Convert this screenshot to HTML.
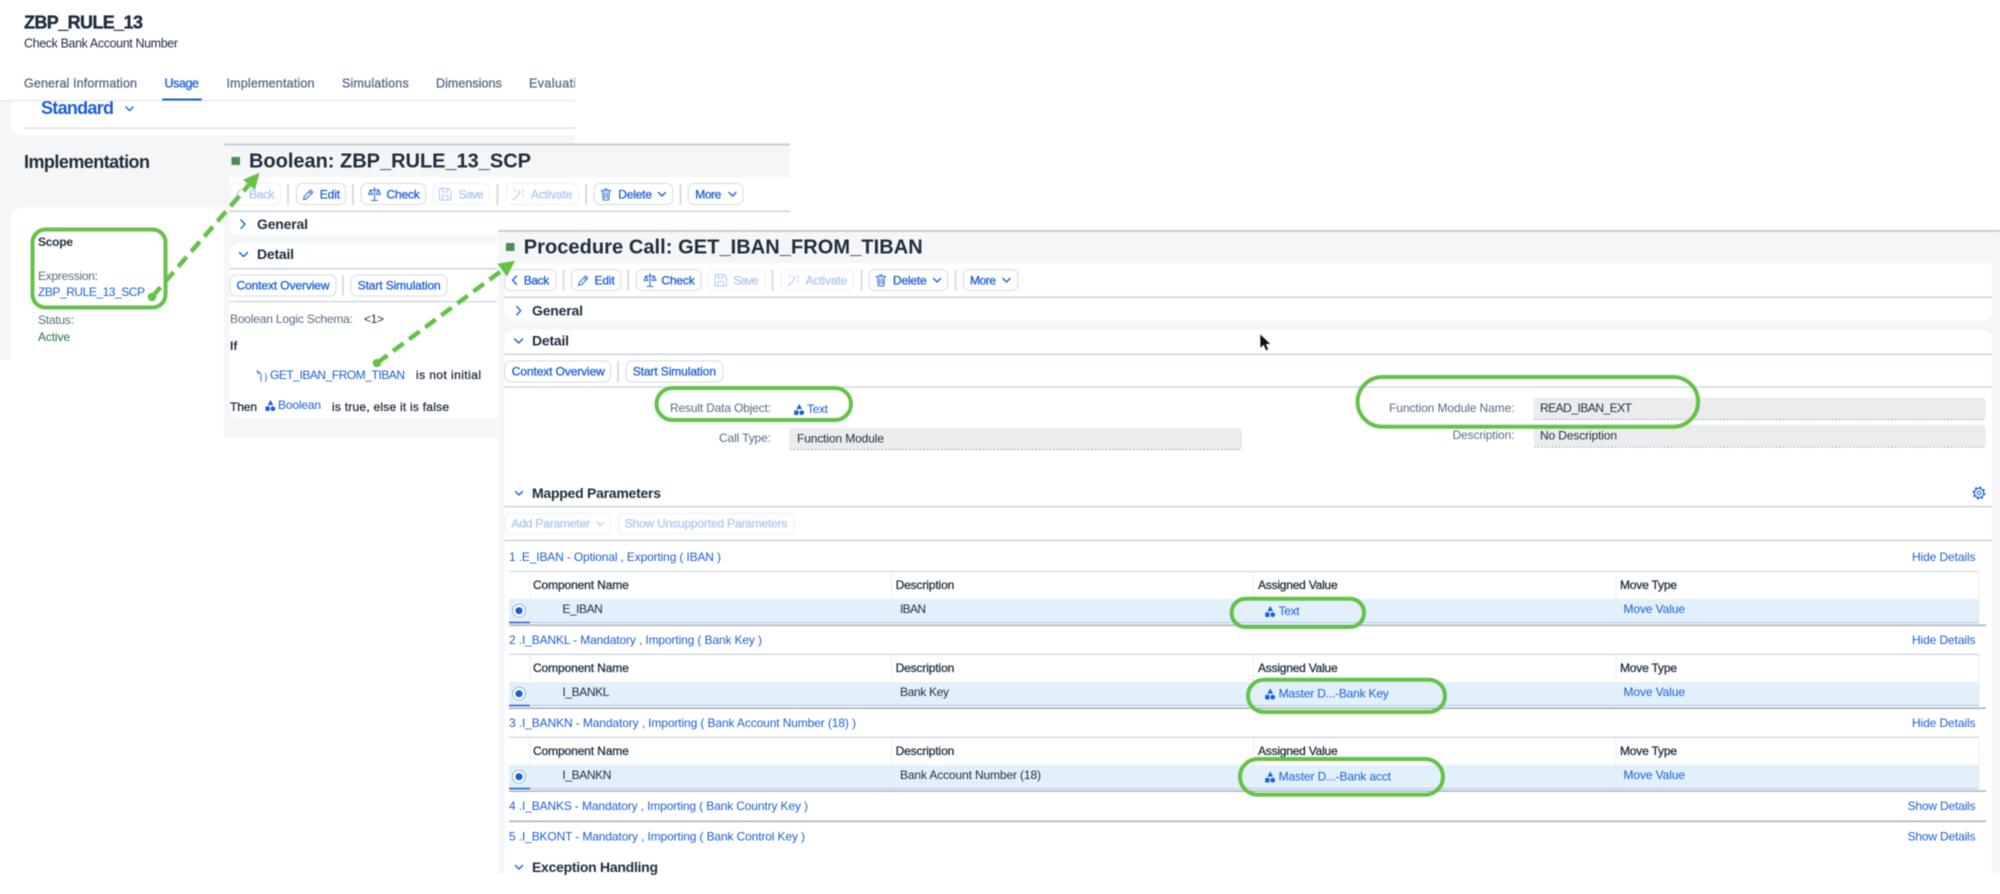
<!DOCTYPE html>
<html lang="en">
<head>
<meta charset="utf-8">
<title>ZBP_RULE_13</title>
<style>
html,body{margin:0;padding:0;background:#fff;width:2000px;height:894px;overflow:hidden}
svg{display:block;filter:blur(.4px)}
text{font-family:"Liberation Sans",sans-serif;font-size:12px;fill:#1d2d3e}
.b{font-weight:700}
.s{stroke:#1d2d3e;stroke-width:.3px}
.l{fill:#1a5fd6}
.l.s{stroke:#1a5fd6}
.g{fill:#556b82}
.g.s{stroke:#556b82}
.d{fill:#aec8ef}
.d.s{stroke:#aec8ef}
.bt{fill:#fff;stroke:#d5dae1;stroke-width:1}
.bd{fill:#fff;stroke:#ebeff3;stroke-width:1}
.sep{stroke:#cfd4d9;stroke-width:1.6}
.ic{fill:none;stroke:#2f6fd9;stroke-width:1.1;stroke-linecap:round;stroke-linejoin:round}
.icd{fill:none;stroke:#b4cbef;stroke-width:1.1;stroke-linecap:round;stroke-linejoin:round}
.ch{fill:none;stroke:#1a5fd6;stroke-width:1.4;stroke-linecap:round;stroke-linejoin:round}
.ov{fill:none;stroke:#64c247;stroke-width:4}
</style>
</head>
<body>
<svg width="2000" height="894" viewBox="0 0 2000 894" xmlns="http://www.w3.org/2000/svg">
<defs>
<symbol id="dobj" viewBox="0 0 11 12">
<path d="M5.5 0L8.6 5.6H2.4Z" fill="#1a5fd6"/>
<rect x="0" y="7" width="4.6" height="5" rx=".8" fill="#1a5fd6"/>
<circle cx="8.2" cy="9.5" r="2.6" fill="#1a5fd6"/>
</symbol>
</defs>

<!-- Panel 1 -->
<rect x="0" y="0" width="2000" height="894" fill="#fff"/>
<rect x="0" y="100" width="575" height="44" fill="#f5f6f7"/>
<rect x="0" y="144" width="224" height="216" fill="#f5f6f7"/>
<path d="M11 100H575V135H23a12 12 0 0 1-12-12Z" fill="#fff"/>
<rect x="24" y="127.500" width="551" height="1.200" fill="#d3dae2"/>
<text class="l b" x="41" y="114" style="font-size:18px" textLength="73">Standard</text>
<path class="ch" d="M126 107l3.500 3.500 3.500-3.500"/>
<rect x="0" y="0" width="575" height="100" fill="#fff"/>
<rect x="0" y="100" width="575" height="1.200" fill="#dfe3e8"/>
<text class="b" x="24" y="28.500" style="font-size:18px;stroke:#1d2d3e;stroke-width:.35px" textLength="119">ZBP_RULE_13</text>
<text x="24" y="47.500" style="font-size:12.500px" textLength="154">Check Bank Account Number</text>
<text class="g s" x="24" y="87.500" textLength="113" style="font-size:12.500px">General Information</text>
<text class="l s" x="164.500" y="87.500" textLength="34.500" style="font-size:12.500px">Usage</text>
<text class="g s" x="226.500" y="87.500" textLength="88" style="font-size:12.500px">Implementation</text>
<text class="g s" x="342" y="87.500" textLength="66.700" style="font-size:12.500px">Simulations</text>
<text class="g s" x="436" y="87.500" textLength="65.700" style="font-size:12.500px">Dimensions</text>
<text class="g s" x="529" y="87.500" textLength="62" style="font-size:12.500px">Evaluation</text>
<rect x="575" y="60" width="60" height="40" fill="#fff"/>
<rect x="162" y="98.500" width="40" height="2" rx="1" fill="#1a5fd6"/>
<text class="b" x="24" y="168" style="font-size:18px" textLength="126">Implementation</text>

<path d="M23 207H224V360H11V219a12 12 0 0 1 12-12Z" fill="#fff"/>
<text class="b" x="38" y="246" textLength="35">Scope</text>
<text class="g" x="38" y="280" textLength="60">Expression:</text>
<text class="l" x="38" y="296" textLength="107">ZBP_RULE_13_SCP</text>
<text class="g" x="38" y="324" textLength="36">Status:</text>
<text x="38" y="341" textLength="32" style="fill:#256f3a">Active</text>

<!-- Panel 2 -->
<rect x="224" y="144" width="566" height="86" fill="#f5f6f7"/>
<rect x="224" y="230" width="273" height="208" fill="#f5f6f7"/>
<rect x="224" y="143.500" width="566" height="2" fill="#c9cdd1"/>
<rect x="231.500" y="157" width="8.500" height="8" fill="#4c8c56"/>
<text class="b" x="249" y="167.700" style="font-size:20px" textLength="282">Boolean: ZBP_RULE_13_SCP</text>
<rect x="229" y="177" width="561" height="33.500" fill="#fff"/>
<rect x="229" y="210.500" width="561" height="1.500" fill="#c8d0da"/>
<path d="M229 212H790V230H497V235H239a10 10 0 0 1-10-10Z" fill="#fff"/>
<path d="M240 244H497V268H230V254a10 10 0 0 1 10-10Z" fill="#fff"/>
<rect x="230" y="268" width="267" height="1.500" fill="#c8d0da"/>
<path d="M230 269.500H497V418H240a10 10 0 0 1-10-10Z" fill="#fff"/>
<rect x="230" y="301" width="267" height="1.200" fill="#c8d0da"/>

<rect class="bd" x="229.800" y="183.500" width="50.700" height="21" rx="6"/>
<rect class="bt" x="296.600" y="183.500" width="49" height="21" rx="6"/>
<rect class="bt" x="361" y="183.500" width="64.600" height="21" rx="6"/>
<rect class="bd" x="433" y="183.500" width="56.500" height="21" rx="6"/>
<rect class="bd" x="506" y="183.500" width="72.600" height="21" rx="6"/>
<rect class="bt" x="594" y="183.500" width="78.700" height="21" rx="6"/>
<rect class="bt" x="688.300" y="183.500" width="54.700" height="21" rx="6"/>
<path class="sep" d="M288 184v21M353 184v21M497.500 184v21M586 184v21M680.500 184v21"/>
<path class="icd" d="M241 189l-4 4.500 4 4.500"/>
<text class="d s" x="249" y="198.500" textLength="25.500">Back</text>
<path class="ic" d="M303.500 199.500l.8-3 6.200-6.500 2.200 2.200-6.200 6.500zM309 191.500l2.200 2.200"/>
<text class="l s" x="319.800" y="198.500" textLength="20.300">Edit</text>
<path class="ic" d="M374.500 187.500v13M371.500 200.500h6M370 190h9M370.500 190l-2 4.500h4zM378.500 190l-2 4.500h4z"/>
<text class="l s" x="386.500" y="198.500" textLength="33.300">Check</text>
<path class="icd" d="M439.500 188.500h9l2.500 2.500v9h-11.500zM442.500 188.500v3.500h5v-3.500M442.500 200.500v-5h5.500v5"/>
<text class="d s" x="458.500" y="198.500" textLength="25">Save</text>
<path class="icd" d="M513 200l7-7.500M518.500 190.500l1 1M523 189.500v1.500M515 189v2M523 194v2"/>
<text class="d s" x="531" y="198.500" textLength="41.500">Activate</text>
<path class="ic" d="M601 190.500h10M602.500 190.500l.7 9.500h5.600l.7-9.500M604.500 189h3M604.800 192.500v5.500M607.200 192.500v5.500"/>
<text class="l s" x="618.300" y="198.500" textLength="33.700">Delete</text>
<path class="ch" d="M658.500 192.500l3.500 3.500 3.500-3.500"/>
<text class="l s" x="695.300" y="198.500" textLength="26">More</text>
<path class="ch" d="M729 192.500l3.500 3.500 3.500-3.500"/>

<path class="ch" d="M241 220l4 4.200-4 4.200"/>
<text class="b" x="257" y="229" style="font-size:14px" textLength="51">General</text>
<path class="ch" d="M239.500 252.500l4 4 4-4"/>
<text class="b" x="257" y="259" style="font-size:14px" textLength="37">Detail</text>
<rect class="bt" x="230" y="275" width="106" height="21" rx="6"/>
<path class="sep" d="M343 275v21"/>
<rect class="bt" x="351" y="275" width="96" height="21" rx="6"/>
<text class="l s" x="236.500" y="289.500" textLength="93">Context Overview</text>
<text class="l s" x="357.700" y="289.500" textLength="83">Start Simulation</text>
<text class="g" x="230" y="323" textLength="123">Boolean Logic Schema:</text>
<text x="364" y="323" textLength="20">&lt;1&gt;</text>
<text class="b" x="230" y="350">If</text>
<path d="M257 371l3 1.500-1.500 1.500zM262 373.500q-1 0-1 1.500v1.500q0 1-1 1 1 0 1 1v1.500q0 1.500 1 1.500M265 373.500q1 0 1 1.500v1.500q0 1 1 1-1 0-1 1v1.500q0 1.500-1 1.500" fill="none" stroke="#1a5fd6" stroke-width=".8"/>
<text class="l" x="270" y="379" textLength="135">GET_IBAN_FROM_TIBAN</text>
<text class="s" x="416" y="379" textLength="65">is not initial</text>
<text class="s" x="230" y="411" textLength="27">Then</text>
<use href="#dobj" x="265" y="400" width="11" height="11"/>
<text class="l" x="278" y="409" textLength="43">Boolean</text>
<text class="s" x="332" y="411" textLength="117">is true, else it is false</text>

<!-- Panel 3 -->
<rect x="498" y="230" width="1502" height="643" fill="#f5f6f7"/>
<rect x="498" y="230" width="1502" height="2" fill="#c9cdd1"/>
<rect x="506" y="243" width="8.500" height="8" fill="#4c8c56"/>
<text class="b" x="523.700" y="253.700" style="font-size:20px" textLength="399">Procedure Call: GET_IBAN_FROM_TIBAN</text>
<rect x="504.500" y="263" width="1487.500" height="33.500" fill="#fff"/>
<rect x="504.500" y="296.500" width="1487.500" height="1.500" fill="#c8d0da"/>
<path d="M504.500 298H1992V311a10 10 0 0 1-10 10H514.500a10 10 0 0 1-10-10Z" fill="#fff"/>
<path d="M514.500 330H1982a10 10 0 0 1 10 10V873H504.500V340a10 10 0 0 1 10-10Z" fill="#fff"/>

<rect class="bt" x="504.800" y="269.500" width="51.200" height="21" rx="6"/>
<rect class="bt" x="571.300" y="269.500" width="49.700" height="21" rx="6"/>
<rect class="bt" x="636.300" y="269.500" width="64.700" height="21" rx="6"/>
<rect class="bd" x="708" y="269.500" width="57" height="21" rx="6"/>
<rect class="bd" x="781" y="269.500" width="72.500" height="21" rx="6"/>
<rect class="bt" x="869" y="269.500" width="78.700" height="21" rx="6"/>
<rect class="bt" x="963.300" y="269.500" width="54.500" height="21" rx="6"/>
<path class="sep" d="M563.500 270v21M628.200 270v21M772.600 270v21M861.600 270v21M955.600 270v21"/>
<path class="ch" d="M516.500 276l-4 4.200 4 4.200"/>
<text class="l s" x="523.700" y="284.500" textLength="25.600">Back</text>
<path class="ic" d="M578.500 285.500l.8-3 6.200-6.500 2.200 2.200-6.200 6.500zM584 277.500l2.200 2.200"/>
<text class="l s" x="594.500" y="284.500" textLength="20.300">Edit</text>
<path class="ic" d="M650 273.500v13M647 286.500h6M645.500 276h9M646 276l-2 4.500h4zM654 276l-2 4.500h4z"/>
<text class="l s" x="661.400" y="284.500" textLength="33.300">Check</text>
<path class="icd" d="M715 274.500h9l2.500 2.500v9H715zM718 274.500v3.500h5v-3.500M718 286.500v-5h5.500v5"/>
<text class="d s" x="733.400" y="284.500" textLength="25">Save</text>
<path class="icd" d="M788 286l7-7.500M793.500 276.500l1 1M798 275.500v1.500M790 275v2M798 280v2"/>
<text class="d s" x="805.700" y="284.500" textLength="41.500">Activate</text>
<path class="ic" d="M876 276.500h10M877.500 276.500l.7 9.500h5.600l.7-9.500M879.500 275h3M879.800 278.500v5.500M882.200 278.500v5.500"/>
<text class="l s" x="893" y="284.500" textLength="33.700">Delete</text>
<path class="ch" d="M933.500 278.500l3.500 3.500 3.500-3.500"/>
<text class="l s" x="970" y="284.500" textLength="26">More</text>
<path class="ch" d="M1003 278.500l3.500 3.500 3.500-3.500"/>

<path class="ch" d="M516.700 306.500l4 4.200-4 4.200"/>
<text class="b" x="532" y="315.700" style="font-size:14px" textLength="51">General</text>
<path class="ch" d="M514.700 339l4 4 4-4"/>
<text class="b" x="532" y="345.700" style="font-size:14px" textLength="37">Detail</text>
<rect x="504.500" y="353.500" width="1487.500" height="1.500" fill="#c8d0da"/>
<rect class="bt" x="504.800" y="361" width="105.700" height="21" rx="6"/>
<path class="sep" d="M618 361v21"/>
<rect class="bt" x="626" y="361" width="97" height="21" rx="6"/>
<text class="l s" x="511.800" y="375.500" textLength="93">Context Overview</text>
<text class="l s" x="632.700" y="375.500" textLength="83.300">Start Simulation</text>
<rect x="504.500" y="386.500" width="1487.500" height="1.200" fill="#c8d0da"/>

<text class="g" x="670" y="412" textLength="101">Result Data Object:</text>
<use href="#dobj" x="794" y="404" width="10.500" height="11"/>
<text class="l" x="807" y="413" textLength="21">Text</text>
<text class="g" x="719" y="442" textLength="52">Call Type:</text>
<rect x="789" y="428" width="453" height="21" rx="3" fill="#eaecee"/>
<path d="M790 449.500H1242" stroke="#a4adb8" stroke-dasharray="2 1.500" fill="none"/>
<text x="797" y="442.500" textLength="87">Function Module</text>
<text class="g" x="1389" y="412" textLength="125.500">Function Module Name:</text>
<rect x="1533.700" y="397.700" width="452" height="21.500" rx="3" fill="#eaecee"/>
<path d="M1534 419.500H1986" stroke="#a4adb8" stroke-dasharray="2 1.500" fill="none"/>
<text x="1540" y="412" textLength="92">READ_IBAN_EXT</text>
<text class="g" x="1452.500" y="439" textLength="62">Description:</text>
<rect x="1533.700" y="425" width="452" height="21.500" rx="3" fill="#eaecee"/>
<path d="M1534 447H1986" stroke="#a4adb8" stroke-dasharray="2 1.500" fill="none"/>
<text x="1540" y="439.500" textLength="77">No Description</text>

<!-- Mapped Parameters -->
<path class="ch" d="M515.500 491.500l3.500 3.500 3.500-3.500"/>
<text class="b" x="532" y="498" style="font-size:14px" textLength="129">Mapped Parameters</text>
<rect x="504.500" y="505.800" width="1487.500" height="1.500" fill="#c8d0da"/>
<g fill="none" stroke="#1a5fd6">
<circle cx="1979" cy="493" r="4.600" stroke-width="1.100"/>
<circle cx="1979" cy="493" r="5.800" stroke-width="1.300" stroke-dasharray="2.200 2.350"/>
<circle cx="1979" cy="493" r="1.800" stroke-width="1"/>
</g>
<rect class="bd" x="505" y="513.500" width="105" height="20.500" rx="6"/>
<rect class="bd" x="618.500" y="513.500" width="175.500" height="20.500" rx="6"/>
<text class="d s" x="511.400" y="527.500" textLength="78.600">Add Parameter</text>
<path class="icd" d="M597 522l3.500 3.500 3.500-3.500"/>
<text class="d s" x="624.700" y="527.500" textLength="162.700">Show Unsupported Parameters</text>
<rect x="504.500" y="539.500" width="1487.500" height="1.800" fill="#d3d7dc"/>

<!-- Section 1 -->
<text class="l" x="509" y="561" textLength="212">1 .E_IBAN - Optional , Exporting ( IBAN )</text>
<text class="l" x="1912" y="561" textLength="63.500">Hide Details</text>
<rect x="509" y="570.500" width="1470" height="1.800" fill="#dfe3e7"/>
<rect x="509" y="599" width="1470" height="23.500" fill="#e2f0fb"/>
<path d="M530 572v50M891.500 572v50M1253.800 572v50M1615.800 572v50M1979 572v50" stroke="#e9ecef" stroke-width="1" fill="none"/>
<text class="s" x="533" y="589" textLength="95.800">Component Name</text>
<text class="s" x="895.600" y="589" textLength="58.700">Description</text>
<text class="s" x="1258" y="589" textLength="79.700">Assigned Value</text>
<text class="s" x="1620" y="589" textLength="57">Move Type</text>
<circle cx="519" cy="610.700" r="6.500" fill="#fff" stroke="#9fb2c8"/>
<circle cx="519" cy="610.700" r="3.600" fill="#1a5fd6"/>
<rect x="509" y="622" width="1470" height="1.300" fill="#b5cdf0"/>
<rect x="509" y="621.800" width="21" height="1.500" fill="#1a5fd6"/>
<rect x="509" y="624.500" width="1477" height="1.500" fill="#a9aeb3"/>
<text x="562.400" y="613" textLength="40.400">E_IBAN</text>
<text x="900" y="613" textLength="26">IBAN</text>
<use href="#dobj" x="1265" y="606" width="10.500" height="11"/>
<text class="l" x="1278.600" y="615" textLength="21">Text</text>
<text class="l" x="1623.500" y="613" textLength="61.500">Move Value</text>

<!-- Section 2 -->
<text class="l" x="509" y="644" textLength="253">2 .I_BANKL - Mandatory , Importing ( Bank Key )</text>
<text class="l" x="1912" y="644" textLength="63.500">Hide Details</text>
<rect x="509" y="653.500" width="1470" height="1.500" fill="#d5dae0"/>
<rect x="509" y="682" width="1470" height="23.500" fill="#e2f0fb"/>
<path d="M530 655v50M891.500 655v50M1253.800 655v50M1615.800 655v50M1979 655v50" stroke="#e9ecef" stroke-width="1" fill="none"/>
<text class="s" x="533" y="672" textLength="95.800">Component Name</text>
<text class="s" x="895.600" y="672" textLength="58.700">Description</text>
<text class="s" x="1258" y="672" textLength="79.700">Assigned Value</text>
<text class="s" x="1620" y="672" textLength="57">Move Type</text>
<circle cx="519" cy="693.700" r="6.500" fill="#fff" stroke="#9fb2c8"/>
<circle cx="519" cy="693.700" r="3.600" fill="#1a5fd6"/>
<rect x="509" y="705" width="1470" height="1.300" fill="#b5cdf0"/>
<rect x="509" y="704.800" width="21" height="1.500" fill="#1a5fd6"/>
<rect x="509" y="707.500" width="1477" height="1.500" fill="#a9aeb3"/>
<text x="562.400" y="696" textLength="47">I_BANKL</text>
<text x="900" y="696" textLength="49">Bank Key</text>
<use href="#dobj" x="1265" y="688.500" width="10.500" height="11"/>
<text class="l" x="1278.600" y="697.700" textLength="110.200">Master D...-Bank Key</text>
<text class="l" x="1623.500" y="696" textLength="61.500">Move Value</text>

<!-- Section 3 -->
<text class="l" x="509" y="727" textLength="347">3 .I_BANKN - Mandatory , Importing ( Bank Account Number (18) )</text>
<text class="l" x="1912" y="727" textLength="63.500">Hide Details</text>
<rect x="509" y="736.500" width="1470" height="1.500" fill="#d5dae0"/>
<rect x="509" y="765" width="1470" height="23.500" fill="#e2f0fb"/>
<path d="M530 738v50M891.500 738v50M1253.800 738v50M1615.800 738v50M1979 738v50" stroke="#e9ecef" stroke-width="1" fill="none"/>
<text class="s" x="533" y="755" textLength="95.800">Component Name</text>
<text class="s" x="895.600" y="755" textLength="58.700">Description</text>
<text class="s" x="1258" y="755" textLength="79.700">Assigned Value</text>
<text class="s" x="1620" y="755" textLength="57">Move Type</text>
<circle cx="519" cy="776.700" r="6.500" fill="#fff" stroke="#9fb2c8"/>
<circle cx="519" cy="776.700" r="3.600" fill="#1a5fd6"/>
<rect x="509" y="788" width="1470" height="1.300" fill="#b5cdf0"/>
<rect x="509" y="787.800" width="21" height="1.500" fill="#1a5fd6"/>
<rect x="509" y="790.300" width="1477" height="1.500" fill="#a9aeb3"/>
<text x="562.400" y="779" textLength="49">I_BANKN</text>
<text x="900" y="779" textLength="141">Bank Account Number (18)</text>
<use href="#dobj" x="1265" y="771.500" width="10.500" height="11"/>
<text class="l" x="1278.600" y="780.700" textLength="112.400">Master D...-Bank acct</text>
<text class="l" x="1623.500" y="779" textLength="61.500">Move Value</text>

<!-- Sections 4,5 -->
<text class="l" x="509" y="810" textLength="299">4 .I_BANKS - Mandatory , Importing ( Bank Country Key )</text>
<text class="l" x="1907.600" y="810" textLength="67.900">Show Details</text>
<rect x="509" y="820.500" width="1477" height="1.500" fill="#a9aeb3"/>
<text class="l" x="509" y="840.700" textLength="296">5 .I_BKONT - Mandatory , Importing ( Bank Control Key )</text>
<text class="l" x="1907.600" y="840.700" textLength="67.900">Show Details</text>
<path class="ch" d="M515.500 865.500l3.500 3.500 3.500-3.500"/>
<text class="b" x="532" y="872" style="font-size:14px" textLength="126">Exception Handling</text>

<!-- Cursor -->
<path d="M1260 334l.3 14 3.300-3 2.300 5.500 2.500-1-2.300-5.300 4.400-.2z" fill="#111" stroke="#ddd" stroke-width=".5"/>

<!-- Green annotations -->
<rect class="ov" x="32.500" y="229.500" width="133" height="78" rx="13"/>
<rect class="ov" x="656.500" y="388" width="194.500" height="32" rx="16"/>
<rect class="ov" x="1357.600" y="377" width="340.500" height="49.700" rx="24.800"/>
<rect class="ov" x="1231.600" y="598.700" width="132.400" height="28.300" rx="14"/>
<rect class="ov" x="1248" y="679.700" width="197" height="32.300" rx="16"/>
<rect class="ov" x="1240" y="759" width="203" height="35.700" rx="17.800"/>
<g fill="#64c247" stroke="none">
<circle cx="152" cy="297" r="4.300"/>
<circle cx="377" cy="363" r="4.300"/>
<path d="M259.500 172.700L255 190L243 179.600Z"/>
<path d="M515 260.700L507 276.600L497.400 263.800Z"/>
</g>
<path d="M152 297L249 184.800" stroke="#64c247" stroke-width="4.500" stroke-dasharray="13 7" fill="none"/>
<path d="M377 363L502.200 270.200" stroke="#64c247" stroke-width="4.500" stroke-dasharray="13 7" fill="none"/>
</svg>
</body>
</html>
